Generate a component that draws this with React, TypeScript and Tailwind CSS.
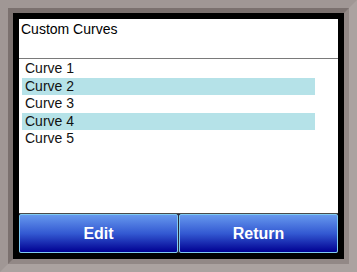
const curves = ["Curve 1", "Curve 2", "Curve 3", "Curve 4", "Curve 5"];

export default function App() {
  return (
    <div className="h-[272px] w-[357px] overflow-hidden font-['Liberation_Sans',Arial,sans-serif]">
      {/* bezel */}
      <div className="h-full w-full border-[8px] border-t-[#a09795] border-l-[#a09795] border-r-[#aba2a0] border-b-[#aba2a0]">
        <div className="h-full w-full border-[5px] border-t-[#7b716f] border-l-[#7b716f] border-r-[#928886] border-b-[#928886]">
          <div className="flex h-full w-full flex-col border-[6px] border-black bg-white">
            {/* title */}
            <div className="h-[40px] shrink-0 border-b border-[#7a7a7a] pl-[2px] pt-[2px] text-[14px] leading-[16px] text-black">
              Custom Curves
            </div>

            {/* list */}
            <div className="flex-1 pl-[3px] pr-[23px] pt-px">
              {curves.map((name, idx) => (
                <div
                  key={name}
                  className={
                    "h-[17.5px] pl-[3px] text-[14px] leading-[17.5px] text-[#111] " +
                    (idx % 2 === 1 ? "bg-[#b5e2e8]" : "")
                  }
                >
                  {name}
                </div>
              ))}
            </div>

            {/* buttons */}
            <div className="grid h-[40px] shrink-0 grid-cols-2 gap-px border-t border-[#4a4a4a] bg-[#2a2a3a]">
              {["Edit", "Return"].map((label) => (
                <button
                  key={label}
                  className="flex items-center justify-center rounded-[2px] border border-[#7fcaf2] bg-[linear-gradient(to_bottom,#6698ee,#3359d2_50%,#000092)] text-[16px] font-bold text-white"
                >
                  {label}
                </button>
              ))}
            </div>
          </div>
        </div>
      </div>
    </div>
  );
}
